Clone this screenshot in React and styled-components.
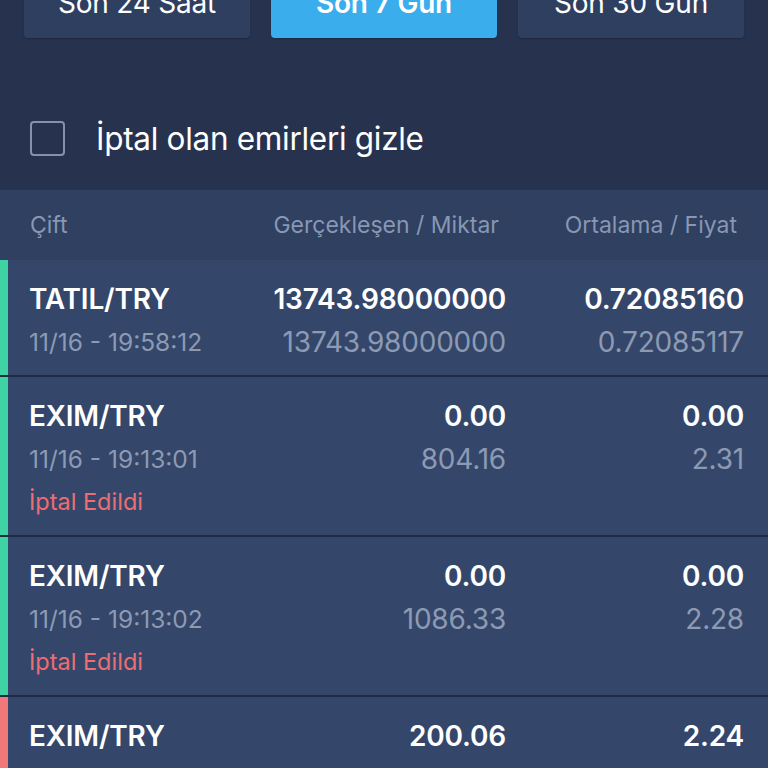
import React from "react";
import styled, { createGlobalStyle } from "styled-components";

const Global = createGlobalStyle`
  html, body { margin: 0; padding: 0; background: #27334e; }
  body { font-family: Inter, "Noto Sans", Roboto, sans-serif; -webkit-font-smoothing: antialiased; }
  * { box-sizing: border-box; }
`;

const Page = styled.div`
  width: 768px;
  height: 768px;
  overflow: hidden;
  background: #27334e;
  display: flex;
  flex-direction: column;
  & > * { flex-shrink: 0; }
`;

const RangeBar = styled.div`
  display: grid;
  grid-template-columns: repeat(3, 226px);
  column-gap: 21px;
  padding: 0 24px;
  margin-top: -32px;
`;

const RangeButton = styled.div`
  height: 70px;
  border-radius: 4px;
  display: flex;
  align-items: center;
  justify-content: center;
  font-size: 28px;
  font-weight: ${p => (p.$active ? 600 : 400)};
  color: #ffffff;
  letter-spacing: -0.2px;
  background: ${p => (p.$active ? "#3aaeec" : "#2f3f5f")};
  box-shadow: 0 1px 2px rgba(0, 0, 0, 0.25);
`;

const FilterRow = styled.label`
  height: 152px;
  display: flex;
  align-items: center;
  gap: 31px;
  padding: 48px 30px 0;
`;

const CheckBox = styled.span`
  width: 35px;
  height: 35px;
  border: 2px solid #8592ad;
  border-radius: 4px;
  flex: none;
`;

const FilterText = styled.span`
  font-size: 31.5px;
  color: #ffffff;
  letter-spacing: -0.3px;
`;

const Grid = styled.div`
  display: grid;
  grid-template-columns: 1fr 236px 238px;
`;

const HeadRow = styled(Grid)`
  height: 70px;
  align-items: center;
  background: #2f4060;
  padding: 0 31px 0 30px;
  font-size: 23px;
  color: #8797b4;
  & > span:not(:first-child) { text-align: right; }
`;

const OrderRow = styled.div`
  position: relative;
  background: #34476a;
  border-bottom: 2px solid #1f2b42;
  padding: 17px 24px 12px 29px;
  &::before {
    content: "";
    position: absolute;
    left: 0;
    top: 0;
    bottom: 0;
    width: 8px;
    background: ${p => (p.$side === "sell" ? "#f07878" : "#3fd3a3")};
  }
`;

const Line = styled(Grid)`
  height: 43px;
  align-items: center;
  & > span:not(:first-child) { text-align: right; }
`;

const Title = styled.span`
  font-size: 28px;
  font-weight: 600;
  color: #ffffff;
  letter-spacing: -0.2px;
`;

const Sub = styled.span`
  font-size: 28px;
  color: #8d9ab3;
  letter-spacing: -0.2px;
`;

const DateText = styled(Sub)`
  font-size: 24.5px;
  letter-spacing: 0;
`;

const Status = styled.span`
  font-size: 23.5px;
  color: #ee6d74;
`;

const orders = [
  { pair: "TATIL/TRY", date: "11/16 - 19:58:12", filled: "13743.98000000", amount: "13743.98000000", avg: "0.72085160", price: "0.72085117", side: "buy" },
  { pair: "EXIM/TRY", date: "11/16 - 19:13:01", filled: "0.00", amount: "804.16", avg: "0.00", price: "2.31", side: "buy", cancelled: true },
  { pair: "EXIM/TRY", date: "11/16 - 19:13:02", filled: "0.00", amount: "1086.33", avg: "0.00", price: "2.28", side: "buy", cancelled: true },
  { pair: "EXIM/TRY", date: "11/16 - 19:12:40", filled: "200.06", amount: "200.06", avg: "2.24", price: "2.24", side: "sell" },
];

export default function App() {
  return (
    <Page>
      <Global />
      <RangeBar>
        <RangeButton>Son 24 Saat</RangeButton>
        <RangeButton $active>Son 7 Gün</RangeButton>
        <RangeButton>Son 30 Gün</RangeButton>
      </RangeBar>
      <FilterRow>
        <CheckBox />
        <FilterText>İptal olan emirleri gizle</FilterText>
      </FilterRow>
      <HeadRow>
        <span>Çift</span>
        <span>Gerçekleşen / Miktar</span>
        <span>Ortalama / Fiyat</span>
      </HeadRow>
      {orders.map((o, i) => (
        <OrderRow key={i} $side={o.side}>
          <Line>
            <Title>{o.pair}</Title>
            <Title>{o.filled}</Title>
            <Title>{o.avg}</Title>
          </Line>
          <Line>
            <DateText>{o.date}</DateText>
            <Sub>{o.amount}</Sub>
            <Sub>{o.price}</Sub>
          </Line>
          {o.cancelled && (
            <Line>
              <Status>İptal Edildi</Status>
            </Line>
          )}
        </OrderRow>
      ))}
    </Page>
  );
}
